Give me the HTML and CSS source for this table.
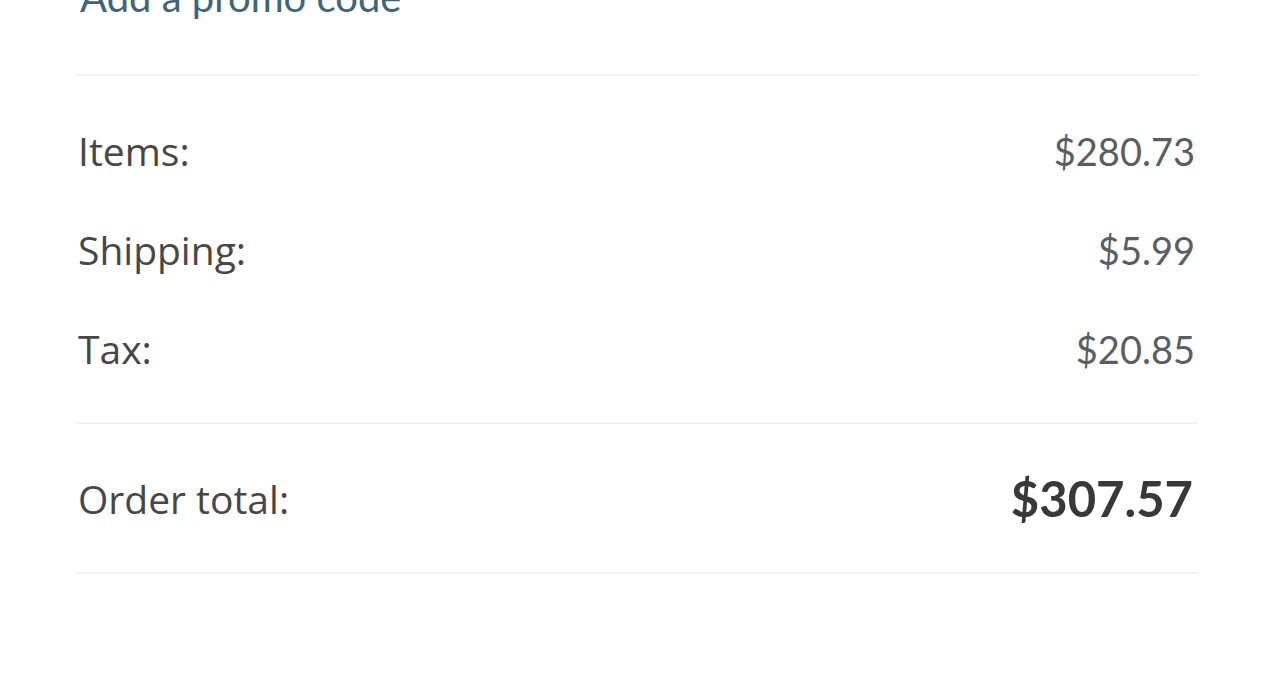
FILE: index.html
```html
<!DOCTYPE html>
<html lang="en">
<head>
  <meta charset="UTF-8">
  <title>Order summary</title>
  <link rel="stylesheet" href="styles.css">
</head>
<body>

  <div class="resumo">
    <div class="promo">
      <a href="#" class="promo-link">Add a promo code</a>
    </div>

    <div class="linhas">
      <div class="linha">
        <span class="rotulo">Items:</span>
        <span class="valor">$280.73</span>
      </div>
      <div class="linha">
        <span class="rotulo">Shipping:</span>
        <span class="valor">$5.99</span>
      </div>
      <div class="linha">
        <span class="rotulo">Tax:</span>
        <span class="valor">$20.85</span>
      </div>
    </div>

    <div class="total">
      <span class="rotulo">Order total:</span>
      <span class="valor-total">$307.57</span>
    </div>
  </div>

</body>
</html>
```

FILE: styles.css
```css
body {
  font-family: Lato, 'Noto Sans', sans-serif;
  margin: 0;
  background-color: #fff;
  color: #444;
}

.resumo {
  margin: 0 76px;
}

.promo {
  display: flow-root;
  height: 74px;
}

.promo-link {
  display: block;
  margin-top: -33px;
  padding-left: 4px;
  font-size: 40px;
  line-height: 60px;
  color: #416478;
  text-decoration: none;
}

.linhas {
  border-top: 2px solid #f1f1f1;
  border-bottom: 2px solid #f1f1f1;
  padding: 25px 0 24px;
}

.linha {
  display: flex;
  justify-content: space-between;
  align-items: center;
  height: 99px;
  padding: 0 3px 0 2px;
}

.rotulo {
  font-family: 'Open Sans', Lato, sans-serif;
  font-size: 39px;
  color: #474747;
}

.valor {
  font-size: 38px;
  color: #5a5e61;
}

.total {
  display: flex;
  justify-content: space-between;
  align-items: center;
  height: 148px;
  padding: 0 5px 0 2px;
  border-bottom: 2px solid #f1f1f1;
}

.valor-total {
  font-size: 49px;
  font-weight: bold;
  color: #383838;
}
```
